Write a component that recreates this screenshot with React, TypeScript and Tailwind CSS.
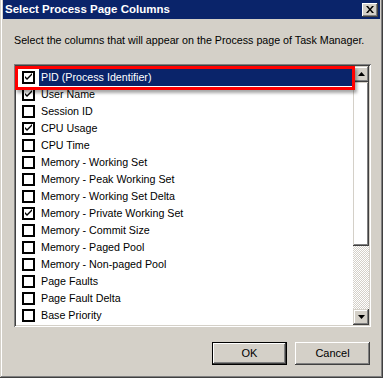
import React from 'react'

const columns = [
  { label: 'PID (Process Identifier)', checked: true },
  { label: 'User Name', checked: true },
  { label: 'Session ID', checked: false },
  { label: 'CPU Usage', checked: true },
  { label: 'CPU Time', checked: false },
  { label: 'Memory - Working Set', checked: false },
  { label: 'Memory - Peak Working Set', checked: false },
  { label: 'Memory - Working Set Delta', checked: false },
  { label: 'Memory - Private Working Set', checked: true },
  { label: 'Memory - Commit Size', checked: false },
  { label: 'Memory - Paged Pool', checked: false },
  { label: 'Memory - Non-paged Pool', checked: false },
  { label: 'Page Faults', checked: false },
  { label: 'Page Fault Delta', checked: false },
  { label: 'Base Priority', checked: false },
]

function CheckBox({ checked }: { checked: boolean }) {
  return (
    <div className="w-[13px] h-[13px] border-2 border-black bg-white flex items-center justify-center shrink-0">
      {checked && (
        <svg width="9" height="9" viewBox="0 0 9 9">
          <path d="M1 3 L1 5 L3 7 L8 2 L8 0 L3 5 Z" fill="#000" />
        </svg>
      )}
    </div>
  )
}

function ScrollButton({ up }: { up?: boolean }) {
  return (
    <div className="w-[16px] h-[16px] bg-[#d4d0c8] flex items-center justify-center shrink-0 shadow-[inset_-1px_-1px_#404040,inset_1px_1px_#d4d0c8,inset_-2px_-2px_#808080,inset_2px_2px_#ffffff]">
      <svg width="7" height="4" viewBox="0 0 7 4">
        {up ? <path d="M3.5 0 L7 4 L0 4 Z" fill="#000" /> : <path d="M0 0 L7 0 L3.5 4 Z" fill="#000" />}
      </svg>
    </div>
  )
}

export default function App() {
  return (
    <div className="w-[383px] h-[378px] bg-[#d4d0c8] flex flex-col px-[3px] pb-[3px] text-black shadow-[inset_-1px_-1px_#404040,inset_1px_0_#d4d0c8,inset_-2px_-2px_#808080,inset_2px_0_#ffffff]"
      style={{ fontFamily: '"Liberation Sans", Arial, sans-serif' }}>

      {/* Title bar */}
      <div className="h-[19px] bg-[#0a246a] flex items-center justify-between pl-[2px] pr-[2px]">
        <span className="text-white font-bold text-[11.5px] leading-none">Select Process Page Columns</span>
        <div className="w-[16px] h-[14px] bg-[#d4d0c8] flex items-center justify-center shadow-[inset_-1px_-1px_#404040,inset_1px_1px_#ffffff,inset_-2px_-2px_#808080,inset_2px_2px_#d4d0c8]">
          <svg width="8" height="7" viewBox="0 0 8 7">
            <path d="M0 0 L2 0 L4 2.5 L6 0 L8 0 L5 3.5 L8 7 L6 7 L4 4.5 L2 7 L0 7 L3 3.5 Z" fill="#000" />
          </svg>
        </div>
      </div>

      <p className="mt-[15px] ml-[11px] text-[10.7px] leading-[13px]">
        Select the columns that will appear on the Process page of Task Manager.
      </p>

      {/* List box */}
      <div className="relative mt-[17px] ml-[11px] w-[357px] h-[263px] p-[2px] bg-white shadow-[inset_1px_1px_#808080,inset_-1px_-1px_#ffffff,inset_2px_2px_#404040,inset_-2px_-2px_#d4d0c8]">
        <div className="flex h-full">
          <div className="flex-1 flex flex-col pt-[3px]">
            {columns.map((c, i) => (
              <div key={c.label} className="h-[17px] flex items-center pl-[6px]">
                <CheckBox checked={c.checked} />
                <span className={`ml-[4px] flex-1 h-[17px] flex items-center px-[2px] text-[10.7px] ${i === 0 ? 'bg-[#0a246a] text-white' : ''}`}>
                  {c.label}
                </span>
              </div>
            ))}
          </div>
          <div className="w-[16px] flex flex-col">
            <ScrollButton up />
            <div className="flex-1 flex flex-col bg-[repeating-conic-gradient(#ffffff_0_25%,#d4d0c8_0_50%)] bg-[length:2px_2px]">
              <div className="h-[164px] bg-white shadow-[inset_-1px_-1px_#404040,inset_1px_1px_#d4d0c8,inset_-2px_-2px_#808080]" />
            </div>
            <ScrollButton />
          </div>
        </div>

        {/* Highlight annotation */}
        <div className="absolute left-[1px] top-[2px] w-[340px] h-[24px] border-[3px] border-[#ff0000] shadow-[2px_3px_3px_rgba(0,0,0,0.35)]" />
      </div>

      {/* Buttons */}
      <div className="flex justify-end gap-[8px] mt-[15px] mr-[10px]">
        <div className="w-[75px] h-[23px] border border-black">
          <div className="w-full h-full flex items-center justify-center text-[11px] shadow-[inset_-1px_-1px_#404040,inset_1px_1px_#ffffff,inset_-2px_-2px_#808080,inset_2px_2px_#d4d0c8]">
            OK
          </div>
        </div>
        <div className="w-[75px] h-[23px] flex items-center justify-center text-[11px] shadow-[inset_-1px_-1px_#404040,inset_1px_1px_#ffffff,inset_-2px_-2px_#808080,inset_2px_2px_#d4d0c8]">
          Cancel
        </div>
      </div>
    </div>
  )
}
